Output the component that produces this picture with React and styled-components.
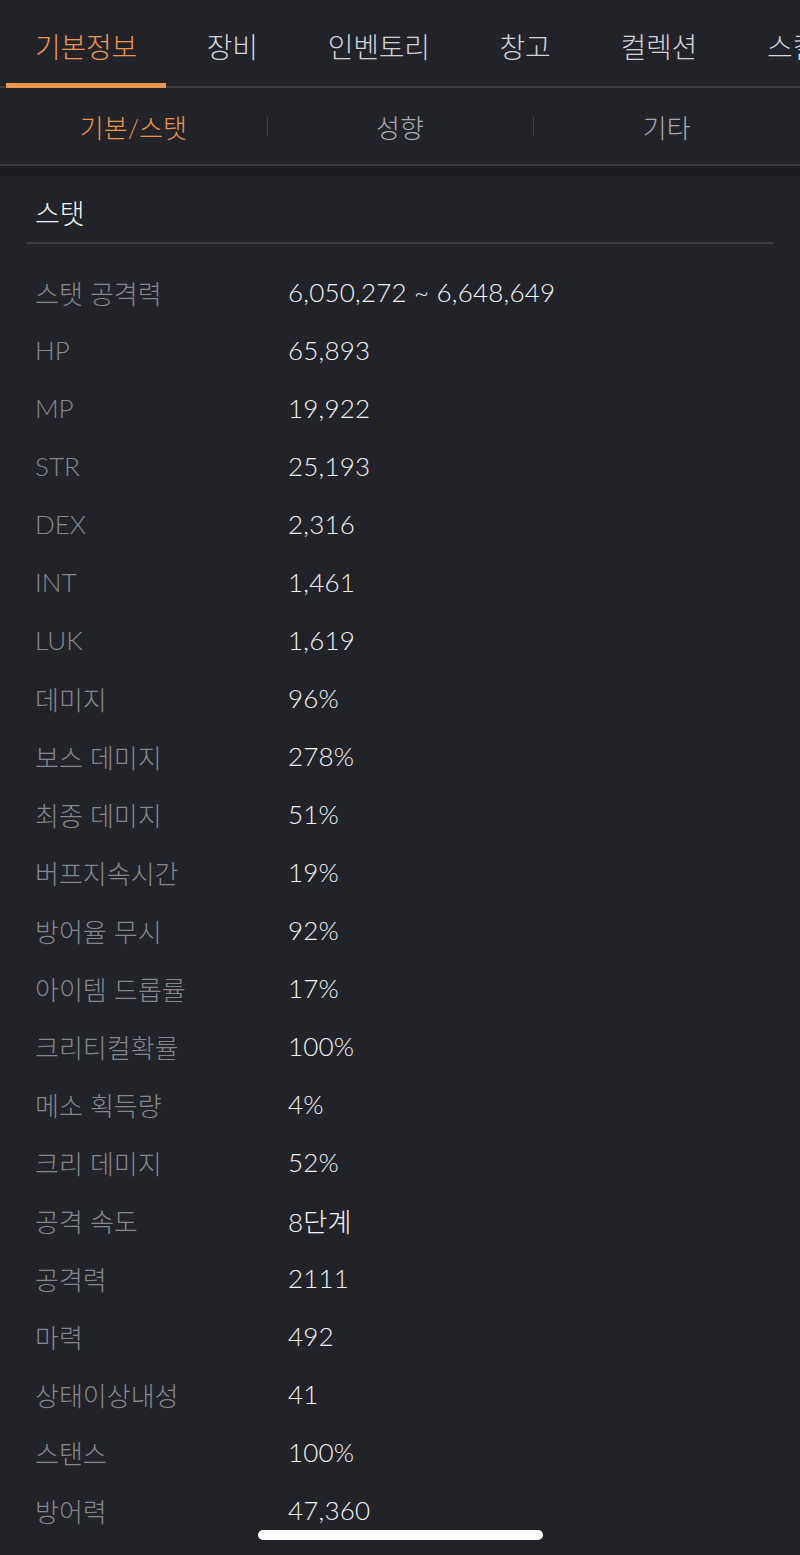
import React from 'react';
import styled, { createGlobalStyle } from 'styled-components';

const GlobalStyle = createGlobalStyle`
  html, body {
    margin: 0;
    padding: 0;
    background-color: #222328;
  }
  body {
    font-family: 'Lato', 'Noto Sans CJK KR', sans-serif;
    font-weight: 300;
    -webkit-font-smoothing: antialiased;
  }
`;

const Page = styled.div`
  position: relative;
  width: 800px;
  min-height: 1555px;
  background-color: #222328;
  overflow: hidden;
`;

const TabBar = styled.nav`
  display: flex;
  align-items: stretch;
  height: 88px;
  padding-left: 6px;
  gap: 12px;
  border-bottom: 2px solid #3b3c41;
  box-sizing: border-box;
  white-space: nowrap;
`;

const Tab = styled.div`
  position: relative;
  display: flex;
  align-items: center;
  padding: 6px 29px 0;
  font-size: 28px;
  letter-spacing: -0.3px;
  color: ${(p) => (p.$active ? '#ee9651' : '#d4d4d8')};
  flex-shrink: 0;

  &::after {
    content: '';
    display: ${(p) => (p.$active ? 'block' : 'none')};
    position: absolute;
    left: 0;
    right: 0;
    bottom: -2px;
    height: 5px;
    background-color: #ee9651;
  }
`;

const SubBar = styled.div`
  display: grid;
  grid-template-columns: repeat(3, 1fr);
  height: 78px;
  border-bottom: 2px solid #3b3c41;
  box-sizing: border-box;
`;

const SubTab = styled.div`
  position: relative;
  display: flex;
  align-items: center;
  justify-content: center;
  font-size: 26px;
  color: ${(p) => (p.$active ? '#ee9651' : '#a9aaae')};

  &:not(:first-child)::before {
    content: '';
    position: absolute;
    left: 0;
    top: 29px;
    width: 1px;
    height: 19px;
    background-color: #3f4045;
  }
`;

const Strip = styled.div`
  height: 10px;
  background-color: #1b1c20;
`;

const Section = styled.section`
  padding: 0 27px;
`;

const SectionTitle = styled.h2`
  margin: 0;
  padding: 20px 8px 10px;
  line-height: 36px;
  font-size: 27px;
  font-weight: 300;
  color: #f6f6f8;
  border-bottom: 2px solid #3d3e44;
`;

const StatList = styled.dl`
  margin: 0;
  padding: 19px 0 0;
`;

const StatRow = styled.div`
  display: grid;
  grid-template-columns: 253px 1fr;
  align-items: center;
  height: 58px;
  padding-left: 8px;
  font-size: 26px;
`;

const StatLabel = styled.dt`
  color: #86878c;
`;

const StatValue = styled.dd`
  margin: 0;
  color: #f4f4f6;
  letter-spacing: 0.2px;
`;

const HomeIndicator = styled.div`
  position: absolute;
  left: 258px;
  bottom: 15px;
  width: 285px;
  height: 10px;
  border-radius: 5px;
  background-color: #ffffff;
`;

const tabs = ['기본정보', '장비', '인벤토리', '창고', '컬렉션', '스킬'];
const subTabs = ['기본/스탯', '성향', '기타'];

const stats = [
  ['스탯 공격력', '6,050,272 ~ 6,648,649'],
  ['HP', '65,893'],
  ['MP', '19,922'],
  ['STR', '25,193'],
  ['DEX', '2,316'],
  ['INT', '1,461'],
  ['LUK', '1,619'],
  ['데미지', '96%'],
  ['보스 데미지', '278%'],
  ['최종 데미지', '51%'],
  ['버프지속시간', '19%'],
  ['방어율 무시', '92%'],
  ['아이템 드롭률', '17%'],
  ['크리티컬확률', '100%'],
  ['메소 획득량', '4%'],
  ['크리 데미지', '52%'],
  ['공격 속도', '8단계'],
  ['공격력', '2111'],
  ['마력', '492'],
  ['상태이상내성', '41'],
  ['스탠스', '100%'],
  ['방어력', '47,360'],
];

const App = () => {
  return (
    <Page>
      <GlobalStyle />
      <TabBar>
        {tabs.map((t, i) => (
          <Tab key={t} $active={i === 0}>{t}</Tab>
        ))}
      </TabBar>
      <SubBar>
        {subTabs.map((t, i) => (
          <SubTab key={t} $active={i === 0}>{t}</SubTab>
        ))}
      </SubBar>
      <Strip />
      <Section>
        <SectionTitle>스탯</SectionTitle>
        <StatList>
          {stats.map(([label, value]) => (
            <StatRow key={label}>
              <StatLabel>{label}</StatLabel>
              <StatValue>{value}</StatValue>
            </StatRow>
          ))}
        </StatList>
      </Section>
      <HomeIndicator />
    </Page>
  );
};

export default App;
